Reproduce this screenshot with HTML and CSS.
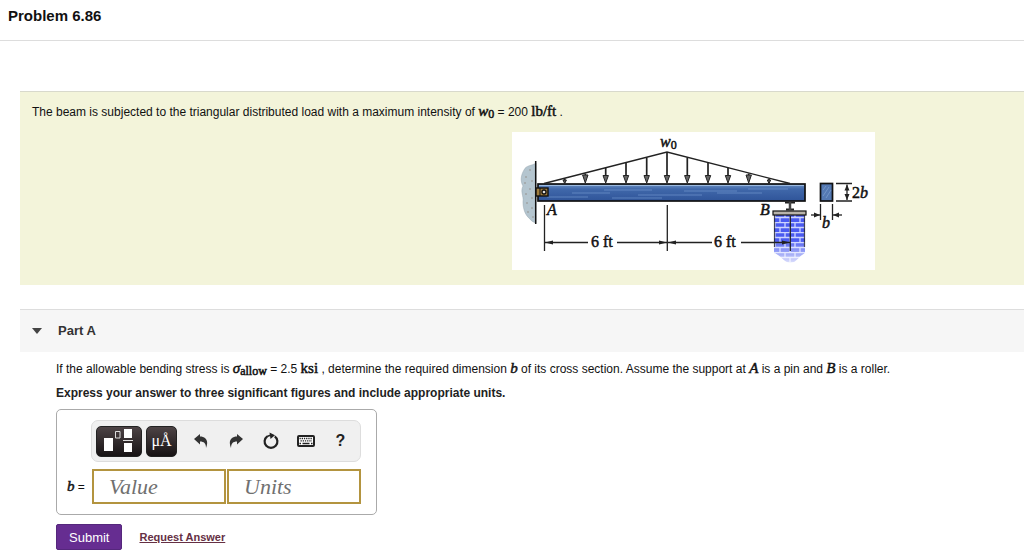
FILE: index.html
```
<!DOCTYPE html>
<html lang="en">
<head>
    <meta charset="UTF-8">
    <meta name="viewport" content="width=device-width, initial-scale=1.0">
    <title>Problem 6.86</title>
    <link rel="stylesheet" href="styles.css">
</head>
<body>
    <header class="page-header">
        <h1>Problem 6.86</h1>
    </header>

    <main class="content">
        <section class="problem">
            <p>The beam is subjected to the triangular distributed load with a maximum intensity of <span class="math"><i>w</i><sub>0</sub></span> = 200 <span class="math">lb/ft</span> .</p>

            <svg class="figure" viewBox="0 0 363 138" role="img" aria-label="Beam with triangular load">
                <defs>
                    <linearGradient id="steel" x1="0" y1="0" x2="0" y2="1">
                        <stop offset="0" stop-color="#6d92c4"/>
                        <stop offset="0.3" stop-color="#4068aa"/>
                        <stop offset="1" stop-color="#2f5499"/>
                    </linearGradient>
                    <pattern id="brick" width="10" height="10" patternUnits="userSpaceOnUse">
                        <rect width="10" height="10" fill="#4a5af0"/>
                        <path d="M0 0.500H10M0 5.500H10M3 0V5M8 5V10" stroke="#ccd4ff" stroke-width="1.300"/>
                    </pattern>
                    <linearGradient id="fade" x1="0" y1="0" x2="0" y2="1">
                        <stop offset="0.5" stop-color="#fff" stop-opacity="0"/>
                        <stop offset="1" stop-color="#fff" stop-opacity="0.85"/>
                    </linearGradient>
                    <marker id="tip" viewBox="0 0 8 6" markerWidth="8" markerHeight="6" refX="8" refY="3" orient="auto-start-reverse" markerUnits="userSpaceOnUse">
                        <path d="M0 1L8 3L0 5Z" fill="#222"/>
                    </marker>
                    <marker id="tip-small" viewBox="0 0 6 6" markerWidth="6" markerHeight="6" refX="6" refY="3" orient="auto-start-reverse" markerUnits="userSpaceOnUse">
                        <path d="M0 0.500L6 3L0 5.500Z" fill="#222"/>
                    </marker>
                </defs>
                <rect width="363" height="138" fill="#fff"/>

                <!-- wall and pin -->
                <path d="M24 31C20 34 14 33 12 38C9 43 8 49 11 54C8 60 12 64 11 70C11 78 14 84 18 87C20 90 22 90 24 91Z" fill="#b4c5cf" stroke="#94a5af" stroke-width="0.5"/>
                <g fill="#8b8177">
                    <circle cx="18" cy="38" r="0.7"/><circle cx="14" cy="45" r="0.7"/><circle cx="20" cy="49" r="0.7"/>
                    <circle cx="13" cy="51" r="0.7"/><circle cx="18" cy="57" r="0.7"/><circle cx="14" cy="62" r="0.7"/>
                    <circle cx="20" cy="66" r="0.7"/><circle cx="15" cy="71" r="0.7"/><circle cx="20" cy="76" r="0.7"/>
                    <circle cx="16" cy="80" r="0.7"/><circle cx="21" cy="85" r="0.7"/>
                </g>
                <path d="M23.7 29V92" stroke="#111" stroke-width="1.5"/>
                <rect x="26" y="52" width="267" height="17" fill="url(#steel)" stroke="#111" stroke-width="1.7"/>
                <path d="M27 53.500H292" stroke="#9bb9df" stroke-width="1"/>
                <path d="M60 61H98M92 58H140M126 63H190M172 59H225M205 61H250M236 57H276M35 65H76M100 66H150" stroke="#7fa4d8" stroke-width="0.7" opacity="0.8"/>
                <rect x="24" y="56" width="12" height="8" fill="#a07d3e" stroke="#111" stroke-width="1.4"/>
                <path d="M28 56V64" stroke="#111"/>
                <circle cx="32" cy="60" r="2" fill="#ddd" stroke="#111" stroke-width="1.3"/>

                <!-- load -->
                <path d="M32 51.500L155 20L278 51.500" fill="none" stroke="#222" stroke-width="1.3"/>
                <path d="M52.700 46.500V50M73.300 41.500V45M93.700 36V44M114 31V44M134.700 25.500V44M155 20V44M175.300 25.500V44M196 31V44M216 36V44M236.700 41.500V45M257 46.500V50" stroke="#222" stroke-width="1.7"/>
                <path d="M51 48H54.400L52.700 51.500ZM70.600 43H76L73.300 51ZM91 43.500H96.400L93.700 51ZM111.300 43.500H116.700L114 51ZM132 43.500H137.400L134.700 51ZM152.300 43.500H157.700L155 51ZM172.600 43.500H178L175.300 51ZM193.300 43.500H198.700L196 51ZM213.300 43.500H218.700L216 51ZM234 43H239.400L236.700 51ZM255.300 48H258.700L257 51.500Z" fill="#666" stroke="#222" stroke-width="1"/>

                <!-- roller support -->
                <path d="M262 83H293V121C287 124 285 130 279 131C272 131 270 124 262 121Z" fill="url(#brick)"/>
                <path d="M261 83H294V132H261Z" fill="url(#fade)"/>
                <path d="M262.500 83V115M292.500 83V115" stroke="#222" stroke-width="1.2" opacity="0.75"/>
                <path d="M273 70.500H283M274 77.500H282" stroke="#222" stroke-width="2"/>
                <path d="M278 70V78" stroke="#444" stroke-width="2.500"/>
                <rect x="261" y="79" width="33" height="4" fill="#b8b3aa" stroke="#111" stroke-width="1.2"/>

                <!-- dimensions -->
                <g stroke="#222" stroke-width="1.300" fill="none">
                    <path d="M32.500 73V119M155.300 73V119M278.300 84V119"/>
                    <path d="M76 110.500H33" marker-end="url(#tip)"/>
                    <path d="M105 110.500H155" marker-end="url(#tip)"/>
                    <path d="M200 110.500H156" marker-end="url(#tip)"/>
                    <path d="M229 110.500H278" marker-end="url(#tip)"/>
                    <path d="M324 51.500H340M324 69H340M308.500 72V88M320.500 72V88"/>
                    <path d="M335 52.500V68" marker-start="url(#tip-small)" marker-end="url(#tip-small)"/>
                    <path d="M299 83H308" marker-end="url(#tip-small)"/>
                    <path d="M330 83H321" marker-end="url(#tip-small)"/>
                </g>
                <rect x="308.500" y="51.500" width="12" height="17.500" fill="#5479b3" stroke="#111" stroke-width="1.700"/>
                <path d="M311 64L317 55M314 66L319 58M311 58L314 54" stroke="#7b9dcd" stroke-width="0.8"/>

                <g class="figure-text">
                    <text x="148" y="15"><tspan font-style="italic">w</tspan><tspan class="figure-sub" dy="2">0</tspan></text>
                    <text x="35" y="83" font-style="italic">A</text>
                    <text x="248" y="83" font-style="italic">B</text>
                    <text x="79" y="115">6 ft</text>
                    <text x="202" y="115">6 ft</text>
                    <text x="340" y="66">2<tspan font-style="italic">b</tspan></text>
                    <text x="310" y="96" font-style="italic">b</text>
                </g>
            </svg>
        </section>

        <section class="part">
            <div class="part-header">
                <button type="button" class="part-toggle" aria-label="Collapse Part A">
                    <svg width="10" height="6" viewBox="0 0 10 6"><path d="M0 0H10L5 6Z" fill="#444"/></svg>
                </button>
                <h2>Part A</h2>
            </div>

            <div class="part-body">
                <p>If the allowable bending stress is <span class="math"><i>σ</i><sub>allow</sub></span> = 2.5 <span class="math">ksi</span> , determine the required dimension <i class="math">b</i> of its cross section. Assume the support at <i class="math">A</i> is a pin and <i class="math">B</i> is a roller.</p>
                <p class="instructions">Express your answer to three significant figures and include appropriate units.</p>

                <form class="answer">
                    <div class="answer-box">
                        <div class="toolbar">
                            <button type="button" class="tool-dark tool-wide" aria-label="Templates">
                                <svg width="32" height="26" viewBox="0 0 32 26">
                                    <path d="M1 10H10V23H1Z" fill="#fff"/>
                                    <path d="M12.500 3.500H17V10H12.500Z" fill="none" stroke="#ddd"/>
                                    <path d="M21 1H29V10H21ZM21 15H29V24H21Z" fill="#fff"/>
                                    <path d="M20 12.500H30" stroke="#ddd"/>
                                </svg>
                            </button>
                            <button type="button" class="tool-dark">μÅ</button>
                            <div class="tools">
                                <button type="button" class="tool" aria-label="Undo">
                                    <svg width="14" height="14" viewBox="0 0 14 14"><path d="M0 5L6 0V2.500C12 2.500 15 7 12 14C12 9.500 10 7.500 6 7.500V10.500Z" fill="#333"/></svg>
                                </button>
                                <button type="button" class="tool" aria-label="Redo">
                                    <svg width="14" height="14" viewBox="0 0 14 14"><path d="M14 5L8 0V2.500C2 2.500 -1 7 2 14C2 9.500 4 7.500 8 7.500V10.500Z" fill="#333"/></svg>
                                </button>
                                <button type="button" class="tool" aria-label="Reset">
                                    <svg width="16" height="18" viewBox="0 0 16 18"><path d="M11.800 4.300A6.400 6.400 0 1 1 4.200 4.300" fill="none" stroke="#222" stroke-width="2.200"/><path d="M6.500 0.500L12 3.300L7.500 7Z" fill="#222"/><path d="M4 4.500L8 3" stroke="#222" stroke-width="1.500"/></svg>
                                </button>
                                <button type="button" class="tool" aria-label="Keyboard">
                                    <svg width="18" height="12" viewBox="0 0 18 12"><rect x="1" y="1" width="16" height="10" rx="1" fill="#fff" stroke="#222" stroke-width="2"/><path d="M2.500 3.500H15.500M3.500 5.800H15" stroke="#222" stroke-width="1.300" stroke-dasharray="1.300 0.900"/><path d="M2.500 8.500H4M5.500 8.500H12.500M14 8.500H15.500" stroke="#222" stroke-width="1.400"/></svg>
                                </button>
                                <button type="button" class="tool tool-help" aria-label="Help">?</button>
                            </div>
                        </div>

                        <div class="fields">
                            <label for="value"><i class="math">b</i> =</label>
                            <input type="text" id="value" placeholder="Value">
                            <input type="text" id="units" placeholder="Units" aria-label="Units">
                        </div>
                    </div>

                    <div class="actions">
                        <button type="submit" class="submit">Submit</button>
                        <a href="#" class="request">Request Answer</a>
                    </div>
                </form>
            </div>
        </section>
    </main>
</body>
</html>
```

FILE: styles.css
```
* {
    margin: 0;
    padding: 0;
    box-sizing: border-box;
}

body {
    font-family: "Liberation Sans", Arial, sans-serif;
    font-size: 12px;
    line-height: 20px;
    color: #111;
    background: #fff;
}

button {
    font-family: inherit;
    border: none;
    background: none;
    cursor: pointer;
}

.page-header {
    padding: 6px 8px 14px;
    border-bottom: 1px solid #ddd;
}

.page-header h1 {
    font-size: 15px;
    line-height: 20px;
}

.content {
    padding: 50px 0 0 20px;
}

.math {
    font-family: "Liberation Serif", "Times New Roman", serif;
    font-size: 15px;
    line-height: 1;
    -webkit-text-stroke: 0.5px #111;
}

.math sub {
    font-size: 12px;
    line-height: 1;
    vertical-align: -2px;
}

.problem {
    padding: 10px 12px 15px;
    background: #f3f4da;
    border-top: 1px solid #d8d9cc;
}

.figure {
    display: block;
    width: 363px;
    max-width: 51%;
    margin: 10px 0 0 49%;
}

.figure-text {
    font-family: "Liberation Serif", "Times New Roman", serif;
    font-size: 16px;
    fill: #111;
    stroke: #111;
    stroke-width: 0.5px;
}

.figure-sub {
    font-size: 12px;
}

.part {
    margin-top: 24px;
}

.part-header {
    display: flex;
    align-items: center;
    gap: 16px;
    padding: 11px 12px;
    background: #f6f6f6;
    border-top: 1px solid #ddd;
}

.part-toggle {
    display: flex;
}

.part-header h2 {
    font-size: 13px;
    color: #333;
}

.part-body {
    padding: 7px 12px 0 36px;
}

.instructions {
    margin-top: 4px;
    font-size: 12px;
    font-weight: bold;
    color: #222;
}

.answer {
    margin-top: 6px;
}

.answer-box {
    width: 321px;
    max-width: 100%;
    padding: 10px 15px 10px 10px;
    border: 1px solid #aaa;
    border-radius: 5px;
}

.toolbar {
    display: flex;
    align-items: center;
    gap: 4px;
    height: 42px;
    margin-left: 24px;
    padding: 0 2px 0 4px;
    background: #f0f0f0;
    border: 1px solid #ddd;
    border-radius: 7px;
}

.tool-dark {
    display: flex;
    flex: none;
    align-items: center;
    justify-content: center;
    width: 31px;
    height: 31px;
    border: 1px solid #222;
    border-radius: 5px;
    background: linear-gradient(#4d4345, #171314);
    color: #fff;
    font-family: "Liberation Serif", "Times New Roman", serif;
    font-size: 16px;
}

.tool-wide {
    width: 46px;
}

.tools {
    display: flex;
    flex: 1;
    padding-left: 2px;
}

.tool {
    display: flex;
    flex: 1;
    align-items: center;
    justify-content: center;
}

.tool-help {
    font-size: 16px;
    font-weight: bold;
    color: #222;
}

.fields {
    display: flex;
    align-items: center;
    gap: 1px;
    margin-top: 7px;
}

.fields label {
    flex: none;
    width: 24px;
}

.fields input {
    flex: 1;
    min-width: 0;
    height: 35px;
    padding: 0 15px;
    border: 2px solid #b3943f;
    background: #fff;
    font-family: "Liberation Serif", "Times New Roman", serif;
    font-size: 22px;
    font-style: italic;
}

.fields input::placeholder {
    color: #707070;
}

.actions {
    display: flex;
    align-items: center;
    gap: 17px;
    margin-top: 9px;
}

.submit {
    height: 26px;
    padding: 0 12px;
    border: 1px solid #55277c;
    border-radius: 2px;
    background: #662d91;
    color: #fff;
    font-size: 13px;
}

.request {
    font-size: 11px;
    font-weight: bold;
    color: #653044;
}
```
